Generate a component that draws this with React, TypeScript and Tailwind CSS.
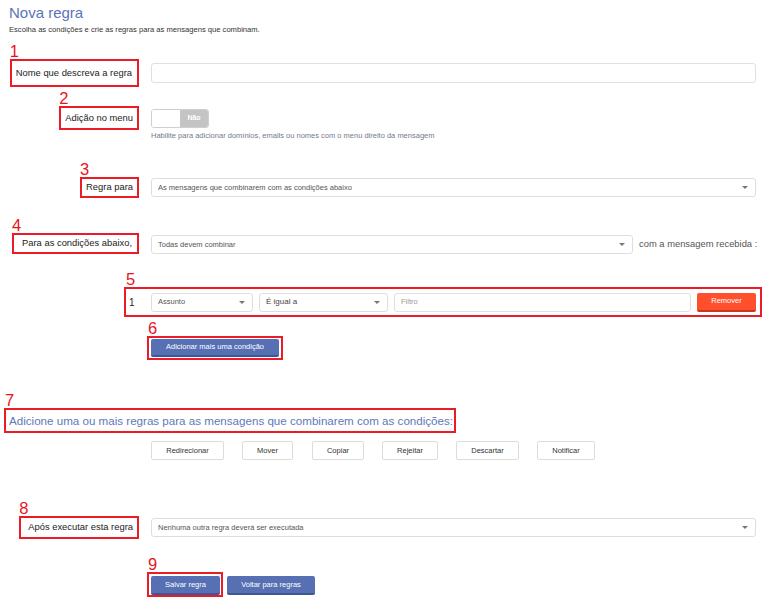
import React from "react";

const RED = "border-[#ec1c24]";

function Num({ n, cls = "" }: { n: string; cls?: string }) {
  return (
    <div className={`text-[#e8141c] text-[16.5px] leading-[15px] h-[15px] ${cls}`}>{n}</div>
  );
}

function Caret() {
  return (
    <span className="w-0 h-0 border-l-[3px] border-r-[3px] border-t-[3px] border-l-transparent border-r-transparent border-t-[#777]" />
  );
}

function Select({ text, cls, textCls = "text-[7.5px] text-[#555]" }: { text: string; cls: string; textCls?: string }) {
  return (
    <div className={`h-[19px] border border-[#dedede] rounded-[3px] bg-white flex items-center justify-between pl-[6px] pr-[7px] ${cls}`}>
      <span className={textCls}>{text}</span>
      <Caret />
    </div>
  );
}

function LabelBox({ n, label, h, cls = "" }: { n: string; label: string; h: string; cls?: string }) {
  return (
    <div className="w-[139px] flex justify-end shrink-0">
      <div className="flex flex-col items-start">
        <Num n={n} />
        <div className={`${h} border-2 ${RED} flex items-center pl-[4px] pr-[4px] text-[9.4px] text-[#222] whitespace-nowrap ${cls}`}>
          {label}
        </div>
      </div>
    </div>
  );
}

function ActionBtn({ text, w }: { text: string; w: string }) {
  return (
    <div className={`${w} h-[19px] border border-[#dcdcdc] rounded-[2px] bg-white flex items-center justify-center text-[7.5px] text-[#333]`}>
      {text}
    </div>
  );
}

export default function App() {
  return (
    <div className="w-[768px] h-[616px] bg-white overflow-hidden font-['Liberation_Sans',Arial,sans-serif]">
      <div className="pt-[4px] pl-[9px] text-[15px] leading-[18px] text-[#5b73b9]">Nova regra</div>
      <div className="mt-[3px] pl-[9px] text-[7.6px] leading-[10px] text-[#333]">
        Escolha as condições e crie as regras para as mensagens que combinam.
      </div>

      {/* Row 1 */}
      <div className="flex items-start mt-[9px]">
        <LabelBox n="1" label="Nome que descreva a regra" h="h-[28px]" cls="pl-[4px] pr-[5px]" />
        <div className="ml-[12px] pt-[19px]">
          <div className="w-[605px] h-[20px] border border-[#e0e0e0] rounded-[3px] bg-white" />
        </div>
      </div>

      {/* Row 2 */}
      <div className="flex items-start mt-[4px]">
        <LabelBox n="2" label="Adição no menu" h="h-[24px]" />
        <div className="ml-[12px] pt-[18px] flex flex-col">
          <div className="w-[58px] h-[19px] rounded-[3px] border border-[#cfcfcf] flex overflow-hidden">
            <div className="w-[28px] bg-white" />
            <div className="flex-1 bg-[#c4c4c4] flex items-center justify-center text-[7px] font-bold text-white">Não</div>
          </div>
          <div className="mt-[3px] text-[7.5px] leading-[10px] text-[#737b8c]">
            Habilite para adicionar domínios, emails ou nomes com o menu direito da mensagem
          </div>
        </div>
      </div>

      {/* Row 3 */}
      <div className="flex items-start mt-[21px]">
        <LabelBox n="3" label="Regra para" h="h-[21px]" />
        <div className="ml-[12px] pt-[16px]">
          <Select text="As mensagens que combinarem com as condições abaixo" cls="w-[605px]" />
        </div>
      </div>

      {/* Row 4 */}
      <div className="flex items-start mt-[20px]">
        <LabelBox n="4" label="Para as condições abaixo," h="h-[21px]" cls="pl-[8px] pr-[5px]" />
        <div className="ml-[12px] pt-[17px] flex items-center">
          <Select text="Todas devem combinar" cls="w-[482px]" />
          <span className="ml-[6px] text-[9.4px] text-[#555] whitespace-nowrap">com a mensagem recebida :</span>
        </div>
      </div>

      {/* Row 5 */}
      <div className="mt-[18px] ml-[124px]">
        <Num n="5" cls="pl-[2px]" />
        <div className={`w-[638px] h-[30px] border-2 ${RED} flex items-center pl-[3px] gap-[6px]`}>
          <span className="w-[16px] text-[10px] text-[#222]">1</span>
          <Select text="Assunto" cls="w-[102px]" />
          <Select text="É igual a" cls="w-[129px]" textCls="text-[8px] text-[#444]" />
          <div className="w-[297px] h-[19px] border border-[#e0e0e0] rounded-[3px] flex items-center pl-[6px] text-[7.5px] text-[#999]">
            Filtro
          </div>
          <div className="w-[59px] h-[19px] rounded-[2px] bg-[#ff4f2d] border-b-2 border-[#c9381c] flex items-center justify-center text-[7.5px] text-white">
            Remover
          </div>
        </div>
      </div>

      {/* Row 6 */}
      <div className="mt-[4px] ml-[147px]">
        <Num n="6" cls="pl-[1px]" />
        <div className={`w-[136px] h-[24px] border-2 ${RED} pl-[2px] pt-[1px]`}>
          <div className="w-[128px] h-[18px] rounded-[2px] bg-[#5670b3] border-b-2 border-[#3f5694] flex items-center justify-center text-[7.5px] text-white">
            Adicionar mais uma condição
          </div>
        </div>
      </div>

      {/* Row 7 */}
      <div className="mt-[33px] ml-[4px]">
        <Num n="7" cls="pl-[1px]" />
        <div className={`w-[452px] h-[25px] border-2 ${RED} flex items-center pl-[3px] text-[11.6px] text-[#5f78bb] whitespace-nowrap`}>
          Adicione uma ou mais regras para as mensagens que combinarem com as condições:
        </div>
      </div>
      <div className="mt-[8px] ml-[151px] flex">
        <ActionBtn text="Redirecionar" w="w-[73px]" />
        <div className="ml-[18px]"><ActionBtn text="Mover" w="w-[51px]" /></div>
        <div className="ml-[19px]"><ActionBtn text="Copiar" w="w-[52px]" /></div>
        <div className="ml-[18px]"><ActionBtn text="Rejeitar" w="w-[56px]" /></div>
        <div className="ml-[18px]"><ActionBtn text="Descartar" w="w-[63px]" /></div>
        <div className="ml-[18px]"><ActionBtn text="Notificar" w="w-[58px]" /></div>
      </div>

      {/* Row 8 */}
      <div className="flex items-start mt-[41px]">
        <LabelBox n="8" label="Após executar esta regra" h="h-[23px]" cls="pl-[7px] pr-[4px]" />
        <div className="ml-[12px] pt-[17px]">
          <Select text="Nenhuma outra regra deverá ser executada" cls="w-[605px]" />
        </div>
      </div>

      {/* Row 9 */}
      <div className="mt-[18px] ml-[147px] flex items-end">
        <div>
          <Num n="9" cls="pl-[1px]" />
          <div className={`w-[76px] h-[25px] border-2 ${RED} pl-[2px] pt-[2px]`}>
            <div className="w-[69px] h-[19px] rounded-[2px] bg-[#5670b3] border-b-2 border-[#3f5694] flex items-center justify-center text-[7.5px] text-white">
              Salvar regra
            </div>
          </div>
        </div>
        <div className="ml-[4px] mb-[2px] w-[88px] h-[19px] rounded-[2px] bg-[#5670b3] border-b-2 border-[#3f5694] flex items-center justify-center text-[7.5px] text-white">
          Voltar para regras
        </div>
      </div>
    </div>
  );
}
